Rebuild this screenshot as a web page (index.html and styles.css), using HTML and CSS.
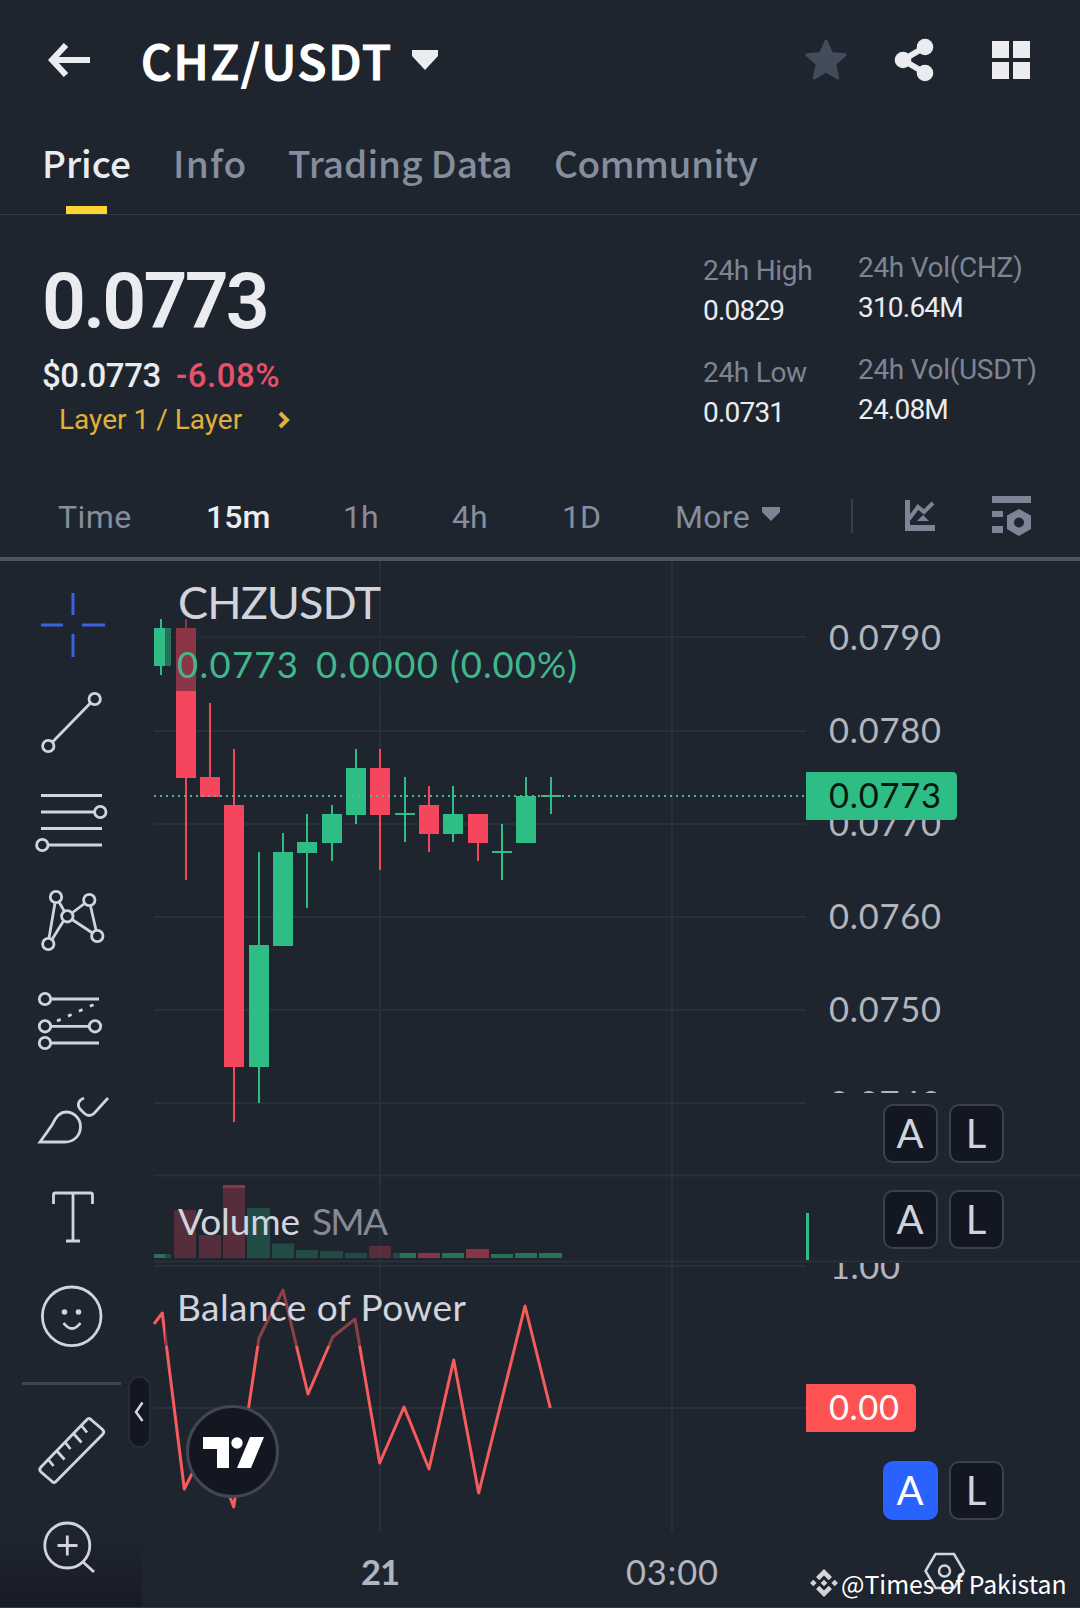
FILE: index.html
```html
<!DOCTYPE html>
<html lang="en">

<head>
    <meta charset="UTF-8">
    <meta name="viewport" content="width=device-width, initial-scale=1.0">
    <title>CHZ/USDT</title>
    <link rel="stylesheet" href="styles.css">
</head>

<body>
    <!-- header -->
    <header class="header">
        <svg class="back" width="42" height="34" viewBox="0 0 42 34"><path d="M18 2L4 17l14 15M3 17h39" /></svg>
        <h1>CHZ/USDT</h1>
        <svg class="caret" width="26" height="20" viewBox="0 0 26 20"><path d="M0 0h26v6L13 20 0 6z" /></svg>
        <div class="actions">
            <svg width="42" height="44" viewBox="0 0 42 44"><path class="star" d="M21 3l5.4 12.500 13.600 1.300-10.300 9 3 14.200L21 33l-11.700 7 3-14.200L2 16.800l13.600-1.300z" /></svg>
            <svg width="40" height="44" viewBox="0 0 40 44">
                <path class="share-line" d="M31 9L9 22l22 13" />
                <circle cx="31" cy="9" r="8.300" /><circle cx="9" cy="22" r="8.300" /><circle cx="31" cy="35" r="8.300" />
            </svg>
            <svg width="38" height="38" viewBox="0 0 38 38"><path d="M0 0h17v17H0zM21 0h17v17H21zM0 21h17v17H0zM21 21h17v17H21z" /></svg>
        </div>
    </header>

    <!-- tabs -->
    <nav class="tabs">
        <a class="tab tab-price active">Price</a>
        <a class="tab tab-info">Info</a>
        <a class="tab tab-data">Trading Data</a>
        <a class="tab tab-community">Community</a>
    </nav>

    <!-- price -->
    <section class="summary">
        <div class="quote">
            <div class="last">0.0773</div>
            <div class="change"><span class="usd">$0.0773</span><span class="down">-6.08%</span></div>
            <div class="tag"><span>Layer 1 / Layer</span>
                <svg width="12" height="18" viewBox="0 0 12 18"><path d="M2 2l7 7-7 7" /></svg>
            </div>
        </div>
        <dl class="stats stats-left">
            <dt>24h High</dt>
            <dd>0.0829</dd>
            <dt>24h Low</dt>
            <dd>0.0731</dd>
        </dl>
        <dl class="stats stats-right">
            <dt>24h Vol(CHZ)</dt>
            <dd>310.64M</dd>
            <dt>24h Vol(USDT)</dt>
            <dd>24.08M</dd>
        </dl>
    </section>

    <!-- intervals -->
    <nav class="intervals">
        <a class="iv-time">Time</a>
        <a class="iv-15m active">15m</a>
        <a class="iv-1h">1h</a>
        <a class="iv-4h">4h</a>
        <a class="iv-1d">1D</a>
        <a class="iv-more">More</a>
        <svg class="more-caret" width="18" height="14" viewBox="0 0 18 14"><path d="M0 0h18v5L9 14 0 5z" /></svg>
        <i class="divider"></i>
        <svg class="icon-chart" width="30" height="31" viewBox="0 0 30 31">
            <path d="M0 0h5v25h25v6H0z" />
            <path class="stroke" d="M4 19l9-12 6 5L28 3" />
            <path d="M12 21l6-6 6 6z" />
        </svg>
        <svg class="icon-settings" width="39" height="40" viewBox="0 0 39 40">
            <path d="M0 0h39v7H0zM0 15h11v6H0zM0 30h11v7H0z" />
            <path fill-rule="evenodd" d="M27 13l12 6.500v13.500l-12 7-12-7V19.500zM27 21.500a5 5 0 1 0 .01 0z" />
        </svg>
    </nav>

    <main class="chart">
        <!-- drawing tools -->
        <aside class="tools">
            <svg class="cross" viewBox="0 576 142 98"><path d="M73 593v22M73 634v23M41 625h22M82 625h23" /></svg>
            <svg viewBox="0 674 142 98"><path d="M52.500 742l38-39" /><circle cx="94.700" cy="699" r="5.700" /><circle cx="48.300" cy="746" r="5.700" /></svg>
            <svg viewBox="0 772 142 98"><path d="M41 795.500h61M41 812h53.500M41 828.500h61M48 845h54" /><circle cx="100.300" cy="812" r="5.700" /><circle cx="42.300" cy="845" r="5.700" /></svg>
            <svg viewBox="0 870 142 98">
                <path d="M55 903l-6 35M59 902l5.500 9.500M63.500 921L52 939.500M72 913l12.500-9.500M90.500 906l5.500 24M72 919.500l20.500 13.500" />
                <circle cx="56" cy="897" r="5.700" /><circle cx="89.300" cy="900" r="5.700" /><circle cx="67.300" cy="916.300" r="5.700" /><circle cx="97.300" cy="936" r="5.700" /><circle cx="48.300" cy="944" r="5.700" />
            </svg>
            <svg viewBox="0 968 142 98">
                <path d="M51 999h48M51 1026.300h38M51 1043h48" /><path stroke-dasharray="4 8" d="M57 1021l38-17" />
                <circle cx="45" cy="999" r="5.700" /><circle cx="45" cy="1026.300" r="5.700" /><circle cx="95" cy="1026.300" r="5.700" /><circle cx="45" cy="1043" r="5.700" />
            </svg>
            <svg viewBox="0 1066 142 98">
                <path d="M40 1142l12-17c4-9 8-13 14-13 8.500 0 14.500 7 14.500 14.500 0 9-6.500 15.500-15.500 15.500z" />
                <path d="M84 1098c-6 2.500-7 7-4 11l4.500 4.500c3 2.500 6.500 2.500 9.500 0l14-15.500" />
            </svg>
            <svg viewBox="0 1164 142 98"><path d="M53.500 1204v-9q0-2 2-2h35q2 0 2 2v9M73 1193v48M66 1241h14" /></svg>
            <svg viewBox="0 1262 142 98">
                <circle cx="71.700" cy="1316.300" r="29.300" /><path d="M63.500 1323q8.500 11 17 0" />
                <circle class="dot" cx="64.500" cy="1312" r="2.800" /><circle class="dot" cx="78.500" cy="1312" r="2.800" />
            </svg>
            <hr>
            <svg viewBox="0 1401 142 98">
                <path d="M86.500 1420q2.500-3 5 0l11 9.500q2.500 2.500 0 5L56.500 1481q-2.500 3-5 0L41 1472q-2.500-2.500 0-5z" />
                <path d="M81 1425l6 7.500M73 1433l8.500 9.500M64.500 1441.500l6 7.500M56 1450l8.500 9.500M47.500 1458.500l6 7.500" />
            </svg>
            <svg viewBox="0 1499 142 98"><circle cx="67.300" cy="1545.500" r="22.500" /><path d="M57.500 1545.500h20M67.300 1535.500v20M83 1562l11 10" /></svg>
        </aside>

        <svg class="plot" viewBox="142 561 938 1047">
            <!-- grid -->
            <path class="grid" d="M380 561v970M672 561v970M154 637h652M154 731h652M154 824h652M154 917h652M154 1010h652M154 1103h652M154 1175.500h926M154 1261.500h926M154 1266h652M154 1408h652" />

            <!-- candles -->
            <g class="up">
                <path d="M160 619h2v56h-2zM258 852h2v251h-2zM282 833h2v20h-2zM306 814h2v94h-2zM331 805h2v56h-2zM355 749h2v75h-2zM404 777h2v65h-2zM452 786h2v56h-2zM501 824h2v56h-2zM525 777h2v20h-2zM550 777h2v37h-2z" />
                <path d="M154 628h17v38h-17zM249 945h20v122h-20zM273 852h20v94h-20zM297 842h20v11h-20zM322 814h20v29h-20zM346 768h20v47h-20zM395 813h20v2h-20zM443 814h20v20h-20zM492 851h20v2h-20zM516 796h20v47h-20zM541 795h20v2h-20z" />
            </g>
            <g class="down">
                <path d="M185 619h2v261h-2zM209 703h2v80h-2zM233 749h2v373h-2zM379 749h2v121h-2zM428 786h2v66h-2zM477 814h2v47h-2z" />
                <path d="M176 628h20v150h-20zM200 777h20v20h-20zM224 805h20v262h-20zM370 768h20v47h-20zM419 805h20v29h-20zM468 814h20v29h-20z" />
            </g>
            <path class="price-line" d="M154 796h652" />

            <!-- volume -->
            <path class="up vol" d="M154 1254h17v4h-17zM247 1208h23v50h-23zM272 1243.500h22v14.500h-22zM296 1250h22v8h-22zM320 1251h23v7h-23zM345 1253h22v5h-22zM393 1253h23v5h-23zM442 1253h22v5h-22zM491 1254h22v4h-22zM515 1253h22v5h-22zM539 1253h23v5h-23z" />
            <path class="down vol" d="M174 1210h22v48h-22zM199 1235h22v23h-22zM223 1185h22v73h-22zM369 1246h22v12h-22zM418 1253h22v5h-22zM466 1249h23v9h-23z" />
            <path class="up" d="M806 1213h3v47h-3z" />

            <!-- balance of power -->
            <path class="bop" d="M154 1324l8.300-11 22 176L209 1440l24.700 67L259 1338l24-48 25 104 24.700-57 22.300-18 24.700 144 24.300-56 25 62 24.700-109 25 133L525 1306l25.300 102" />

            <!-- legend backgrounds -->
            <path class="veil" d="M165 570h227v63h186v58H165zM165 1188h235v72H165zM165 1270h315v76H165z" />

            <!-- legends -->
            <text class="name" x="178" y="619" textLength="203">CHZUSDT</text>
            <text class="green" x="177" y="678" textLength="121">0.0773</text>
            <text class="green" x="316" y="678" textLength="122">0.0000</text>
            <text class="green" x="450" y="678" textLength="127">(0.00%)</text>
            <text class="legend" x="178" y="1235" textLength="122">Volume</text>
            <text class="legend muted" x="312" y="1235" textLength="76">SMA</text>
            <text class="legend" x="177" y="1321" textLength="289">Balance of Power</text>

            <!-- price axis -->
            <clipPath id="clip-price"><path d="M806 561h274v532H806z" /></clipPath>
            <clipPath id="clip-bop"><path d="M806 1263h274v345H806z" /></clipPath>
            <g class="axis" clip-path="url(#clip-price)">
                <text x="829" y="650" textLength="112">0.0790</text>
                <text x="829" y="743" textLength="112">0.0780</text>
                <text x="829" y="836" textLength="112">0.0770</text>
                <text x="829" y="929" textLength="112">0.0760</text>
                <text x="829" y="1022" textLength="112">0.0750</text>
                <text x="829" y="1116" textLength="112">0.0740</text>
            </g>
            <path class="up" d="M806 772h146q5 0 5 5v38q0 5-5 5H806z" />
            <text class="axis on-green" x="829" y="808" textLength="112">0.0773</text>
            <g class="axis" clip-path="url(#clip-bop)"><text x="830" y="1279" textLength="70">1.00</text></g>
            <path class="tag-red" d="M806 1384h105q5 0 5 5v38q0 5-5 5H806z" />
            <text class="axis on-red" x="829" y="1420" textLength="70">0.00</text>

            <!-- time axis -->
            <text class="axis bold" x="361" y="1585" textLength="39">21</text>
            <text class="axis" x="626" y="1585" textLength="92">03:00</text>
            <g class="gear"><path d="M935.500 1554h18.500l10 17-10 17h-18.500l-10-17z" /><circle cx="944.500" cy="1571" r="5.500" /></g>
        </svg>

        <!-- scale buttons -->
        <div class="scale scale-price"><button>A</button><button>L</button></div>
        <div class="scale scale-volume"><button>A</button><button>L</button></div>
        <div class="scale scale-bop"><button class="on">A</button><button>L</button></div>

        <button class="collapse"><svg width="10" height="22" viewBox="0 0 10 22"><path d="M8.500 1.500L2 11l6.500 9" /></svg></button>

        <div class="tv">
            <svg width="61" height="31" viewBox="0 0 61 31"><path d="M0 0h26v31H14V12H0zM47 0h14L48 31H34z" /><circle cx="34" cy="6" r="5.700" /></svg>
        </div>

        <div class="watermark">
            <svg width="28" height="28" viewBox="0 0 28 28"><path d="M14 0l8 8-3.300 3.300L14 6.600l-4.700 4.700L6 8zM3.300 10.700L6.600 14l-3.300 3.300L0 14zM14 10.700l3.300 3.300-3.300 3.300-3.300-3.300zM24.700 10.700L28 14l-3.300 3.300-3.300-3.300zM9.300 16.700l4.700 4.700 4.700-4.700L22 20l-8 8-8-8z" /></svg>
            <span>@Times of Pakistan</span>
        </div>
    </main>
</body>

</html>
```
FILE: styles.css
```css
* {
    padding: 0;
    margin: 0;
    box-sizing: border-box;
}

body {
    width: 1080px;
    height: 1608px;
    overflow: hidden;
    background-color: #1f252f;
    color: #eaecef;
    font-family: Roboto, "Liberation Sans", sans-serif;
}

svg {
    display: block;
    fill: #eaecef;
}

/* header */
.header {
    display: flex;
    align-items: center;
    height: 119px;
    padding: 0 50px 0 48px;
}

.back path {
    fill: none;
    stroke: #eaecef;
    stroke-width: 6;
}

.header h1 {
    width: 271px;
    margin-left: 51px;
    color: #fff;
    font-family: "Noto Sans CJK SC", "Noto Sans", sans-serif;
    font-size: 47.5px;
    font-weight: 500;
    line-height: 60px;
    letter-spacing: 1.8px;
    white-space: nowrap;
    -webkit-text-stroke: 1.2px #fff;
}

.caret {
    margin-bottom: 0;
}

.actions {
    display: flex;
    align-items: center;
    margin-left: auto;
}

.actions svg {
    margin-left: 58px;
}

.actions svg:nth-child(2) {
    margin-left: 47px;
}

.star {
    fill: #434c5a;
    stroke: #434c5a;
    stroke-width: 3;
    stroke-linejoin: round;
}

.share-line {
    fill: none;
    stroke: #eaecef;
    stroke-width: 6;
}

/* tabs */
.tabs {
    display: flex;
    height: 96px;
    padding-left: 42px;
    border-bottom: 1px solid #323943;
    font-family: "Noto Sans CJK SC", "Noto Sans", sans-serif;
    font-size: 37px;
    font-weight: 500;
    line-height: 87px;
    white-space: nowrap;
    color: #848e9c;
}

.tab-price {
    width: 131px;
}

.tab-info {
    width: 115px;
    letter-spacing: 1.2px;
}

.tab-data {
    width: 266px;
}

.tab-community {
    letter-spacing: -0.5px;
}

.tab.active {
    color: #eaecef;
}

.tab.active::after {
    content: "";
    display: block;
    width: 41px;
    height: 8px;
    margin-left: 24px;
    background-color: #fcd535;
}

/* price */
.summary {
    display: flex;
    height: 265px;
    padding-left: 42px;
}

.quote {
    width: 661px;
    padding-top: 47px;
}

.last {
    font-size: 77px;
    font-weight: 600;
    line-height: 80px;
    letter-spacing: -2.8px;
}

.change {
    margin-top: 16px;
    font-size: 33px;
    font-weight: 500;
    line-height: 36px;
}

.usd {
    display: inline-block;
    width: 134px;
    letter-spacing: -0.4px;
}

.down {
    color: #e9506a;
    letter-spacing: 0.5px;
}

.tag {
    display: flex;
    align-items: center;
    padding-left: 17px;
    color: #e0b13a;
    font-size: 28px;
    line-height: 52px;
}

.tag span {
    width: 219px;
}

.tag svg path {
    fill: none;
    stroke: #e0b13a;
    stroke-width: 4;
}

.stats {
    font-size: 28px;
    line-height: 40px;
    white-space: nowrap;
}

.stats-left {
    width: 155px;
    padding-top: 36px;
}

.stats-right {
    padding-top: 33px;
}

.stats dt {
    color: #7d8592;
    letter-spacing: -0.3px;
}

.stats dd {
    margin-bottom: 22px;
    letter-spacing: -0.8px;
}

/* intervals */
.intervals {
    display: flex;
    align-items: center;
    height: 81px;
    padding: 0 0 6px 58px;
    border-bottom: 4px solid #4f5560;
    font-size: 32px;
    color: #848e9c;
}

.intervals a {
    padding-top: 3px;
}

.intervals svg {
    fill: #7c8595;
}

.intervals .active {
    color: #eaecef;
    font-weight: 500;
}

.iv-time {
    width: 148px;
    letter-spacing: 0.4px;
}

.iv-15m {
    width: 137px;
}

.iv-1h {
    width: 109px;
}

.iv-4h {
    width: 110px;
}

.iv-1d {
    width: 113px;
}

.iv-more {
    width: 87px;
    letter-spacing: 0.3px;
}

.more-caret {
    margin-bottom: 3px;
}

.divider {
    width: 2px;
    height: 34px;
    margin: 0 52px 0 71px;
    background-color: #373e49;
}

.icon-chart .stroke {
    fill: none;
    stroke: #7c8595;
    stroke-width: 4;
}

.icon-settings {
    margin: 1px 0 0 57px;
}

/* chart */
.chart {
    position: relative;
    display: flex;
    height: 1047px;
    border-bottom: 1px solid #323943;
}

.tools {
    width: 142px;
    padding-top: 15px;
    background: linear-gradient(transparent 970px, #171b26 1047px);
}

.tools svg {
    width: 142px;
    height: 98px;
    fill: none;
    stroke: #d1d4dc;
    stroke-width: 2.8;
}

.tools .cross {
    stroke: #3b63dc;
    stroke-width: 3;
}

.tools .dot {
    fill: #d1d4dc;
    stroke: none;
}

.tools hr {
    width: 99px;
    height: 3px;
    margin: 22px 0 16px 22px;
    border: 0;
    background-color: #434651;
}

.plot {
    width: 938px;
    height: 1047px;
    font-family: Lato, "Liberation Sans", sans-serif;
}

.plot .grid {
    fill: none;
    stroke: #2a303a;
    stroke-width: 2;
}

.plot .up {
    fill: #2ebd85;
}

.plot .down {
    fill: #f6465d;
}

.plot .vol {
    opacity: 0.5;
}

.price-line {
    stroke: #4fb893;
    stroke-width: 2;
    stroke-dasharray: 2 4;
}

.bop {
    fill: none;
    stroke: #f65c5c;
    stroke-width: 3;
    stroke-linejoin: round;
}

.veil {
    fill: #1f252f;
    opacity: 0.5;
}

.plot .name {
    fill: #d1d4dc;
    font-size: 45px;
}

.plot .green {
    fill: #42b68d;
    font-size: 36.5px;
}

.plot .legend {
    fill: #d1d4dc;
    font-size: 37px;
}

.plot .muted {
    fill: #868993;
}

.plot .axis {
    fill: #b2b5be;
    font-size: 34.5px;
}

.plot .on-green {
    fill: #06180f;
}

.plot .on-red {
    fill: #fff;
}

.plot .bold {
    font-weight: 700;
}

.tag-red {
    fill: #ff5252;
}

.gear {
    fill: none;
    stroke: #d1d4dc;
    stroke-width: 2.5;
}

.scale {
    position: absolute;
    left: 883px;
    display: flex;
    gap: 11px;
}

.scale-price {
    top: 543px;
}

.scale-volume {
    top: 629px;
}

.scale-bop {
    top: 900px;
}

.scale button {
    width: 55px;
    height: 59px;
    padding: 0 1px 2px 0;
    border: 2px solid #3c404b;
    border-radius: 10px;
    background-color: #131722;
    color: #d1d4dc;
    font-family: Lato, "Liberation Sans", sans-serif;
    font-size: 40px;
}

.scale .on {
    border-color: #2962ff;
    background-color: #2962ff;
    color: #fff;
}

.collapse {
    position: absolute;
    top: 815px;
    left: 128px;
    width: 23px;
    height: 72px;
    padding-left: 4px;
    border: 2px solid #282c37;
    border-radius: 11px;
    background-color: #131722;
}

.collapse path {
    fill: none;
    stroke: #d1d4dc;
    stroke-width: 2.5;
}

.tv {
    position: absolute;
    top: 844px;
    left: 186px;
    display: flex;
    align-items: center;
    justify-content: center;
    width: 93px;
    height: 93px;
    padding: 2px 0 0 2px;
    border: 3px solid #434651;
    border-radius: 50%;
    background-color: #131722;
}

.tv svg {
    fill: #fff;
}

.watermark {
    position: absolute;
    top: 1004px;
    left: 810px;
    display: flex;
    align-items: center;
    gap: 3px;
    color: #fff;
    font-family: "Noto Sans CJK SC", "Noto Sans", sans-serif;
    font-size: 24.8px;
    line-height: 36px;
    white-space: nowrap;
}

.watermark svg {
    fill: #d3d4d6;
}
```
